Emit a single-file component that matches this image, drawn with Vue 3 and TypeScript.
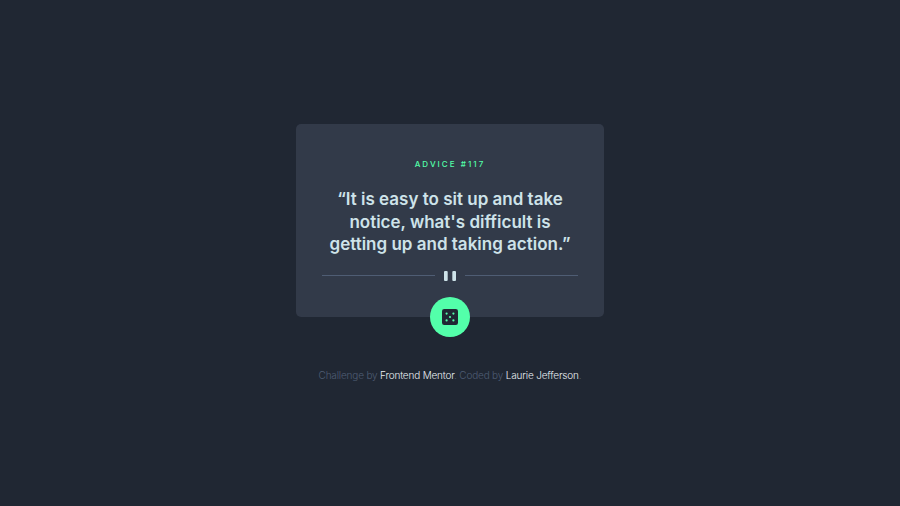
<script setup lang="ts">
const advice = {
  id: 117,
  text: "“It is easy to sit up and take notice, what's difficult is getting up and taking action.”",
};
</script>

<template>
  <main class="page">
    <section class="card">
      <h1 class="label">ADVICE #{{ advice.id }}</h1>
      <p class="quote">{{ advice.text }}</p>
      <div class="divider">
        <span class="rule"></span>
        <svg class="pause" width="12" height="10" viewBox="0 0 12 10" aria-hidden="true">
          <rect x="0" y="0" width="3.7" height="10" rx="1" fill="#cee3e9" />
          <rect x="8.3" y="0" width="3.7" height="10" rx="1" fill="#cee3e9" />
        </svg>
        <span class="rule"></span>
      </div>
      <button class="dice" type="button" aria-label="New advice">
        <svg width="16" height="16" viewBox="0 0 16 16" aria-hidden="true">
          <rect width="16" height="16" rx="2.2" fill="#202733" />
          <circle cx="4.6" cy="4.6" r="1.1" fill="#53ffaa" />
          <circle cx="11.4" cy="4.6" r="1.1" fill="#53ffaa" />
          <circle cx="8" cy="8" r="1.1" fill="#53ffaa" />
          <circle cx="4.6" cy="11.4" r="1.1" fill="#53ffaa" />
          <circle cx="11.4" cy="11.4" r="1.1" fill="#53ffaa" />
        </svg>
      </button>
    </section>
    <footer class="credit">
      Challenge by <a href="#">Frontend Mentor</a>. Coded by <a href="#">Laurie Jefferson</a>.
    </footer>
  </main>
</template>

<style>
html, body { margin: 0; background: #202733; }
</style>

<style scoped>
.page {
  height: 506px;
  box-sizing: border-box;
  padding-top: 124px;
  display: flex;
  flex-direction: column;
  align-items: center;
  background: #202733;
  font-family: Inter, "Noto Sans", sans-serif;
}
.card {
  position: relative;
  box-sizing: border-box;
  width: 308px;
  height: 193px;
  padding: 35px 26px 0;
  background: #323a49;
  border-radius: 5px;
  display: flex;
  flex-direction: column;
  align-items: center;
}
.label {
  margin: 0;
  font-size: 8px;
  line-height: 11px;
  font-weight: 500;
  letter-spacing: 2.05px;
  color: #53ffaa;
}
.quote {
  margin: 18px 0 0;
  font-size: 17px;
  line-height: 22.5px;
  font-weight: 600;
  letter-spacing: 0;
  color: #cee3e9;
  text-align: center;
}
.divider {
  align-self: stretch;
  margin-top: 15px;
  display: flex;
  align-items: center;
  gap: 9px;
}
.rule {
  flex: 1;
  height: 1px;
  background: #4f5d74;
}
.pause { display: block; }
.dice {
  position: absolute;
  left: 134px;
  bottom: -20px;
  width: 40px;
  height: 40px;
  padding: 0;
  border: 0;
  border-radius: 50%;
  background: #53ffaa;
  display: flex;
  align-items: center;
  justify-content: center;
}
.credit {
  margin-top: 50px;
  font-size: 10px;
  line-height: 16px;
  font-weight: 300;
  letter-spacing: -0.18px;
  color: #4f5d74;
}
.credit a {
  color: #e8eef2;
  text-decoration: none;
}
</style>
